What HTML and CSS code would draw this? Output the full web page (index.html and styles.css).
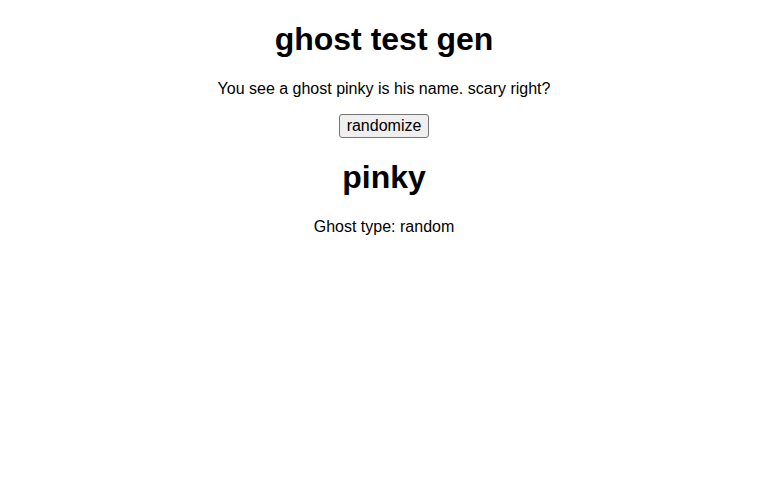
FILE: index.html
```html
<!DOCTYPE html>
<html lang="en">
<head>
    <meta charset="utf-8">
    <meta name="viewport" content="width=device-width, initial-scale=1">
    <title>ghost test gen</title>
    <link rel="stylesheet" href="styles.css">
</head>
<body>

<div class="ghost-gen">
    <h1>ghost test gen</h1>
    <p>You see a ghost pinky is his name. scary right?</p>
    <p><button type="button" class="btn-random">randomize</button></p>
    <h1 class="ghost-name">pinky</h1>
    <p class="ghost-type">Ghost type: random</p>
</div>

</body>
</html>
```

FILE: styles.css
```css
body {
    margin: 0 8px;
    font-family: "Liberation Sans", Arial, sans-serif;
    font-size: 16px;
    color: #000;
    background: #fff;
}

.ghost-gen {
    text-align: center;
}

.ghost-gen h1 {
    font-size: 32px;
    margin: 21.44px 0;
}

.ghost-gen p {
    margin: 16px 0;
}

.btn-random {
    font-family: "Liberation Sans", Arial, sans-serif;
    font-size: 16px;
    color: #000;
    background: #efefef;
    border: 1px solid #767676;
    border-radius: 3px;
    padding: 2px 7px;
}
```
